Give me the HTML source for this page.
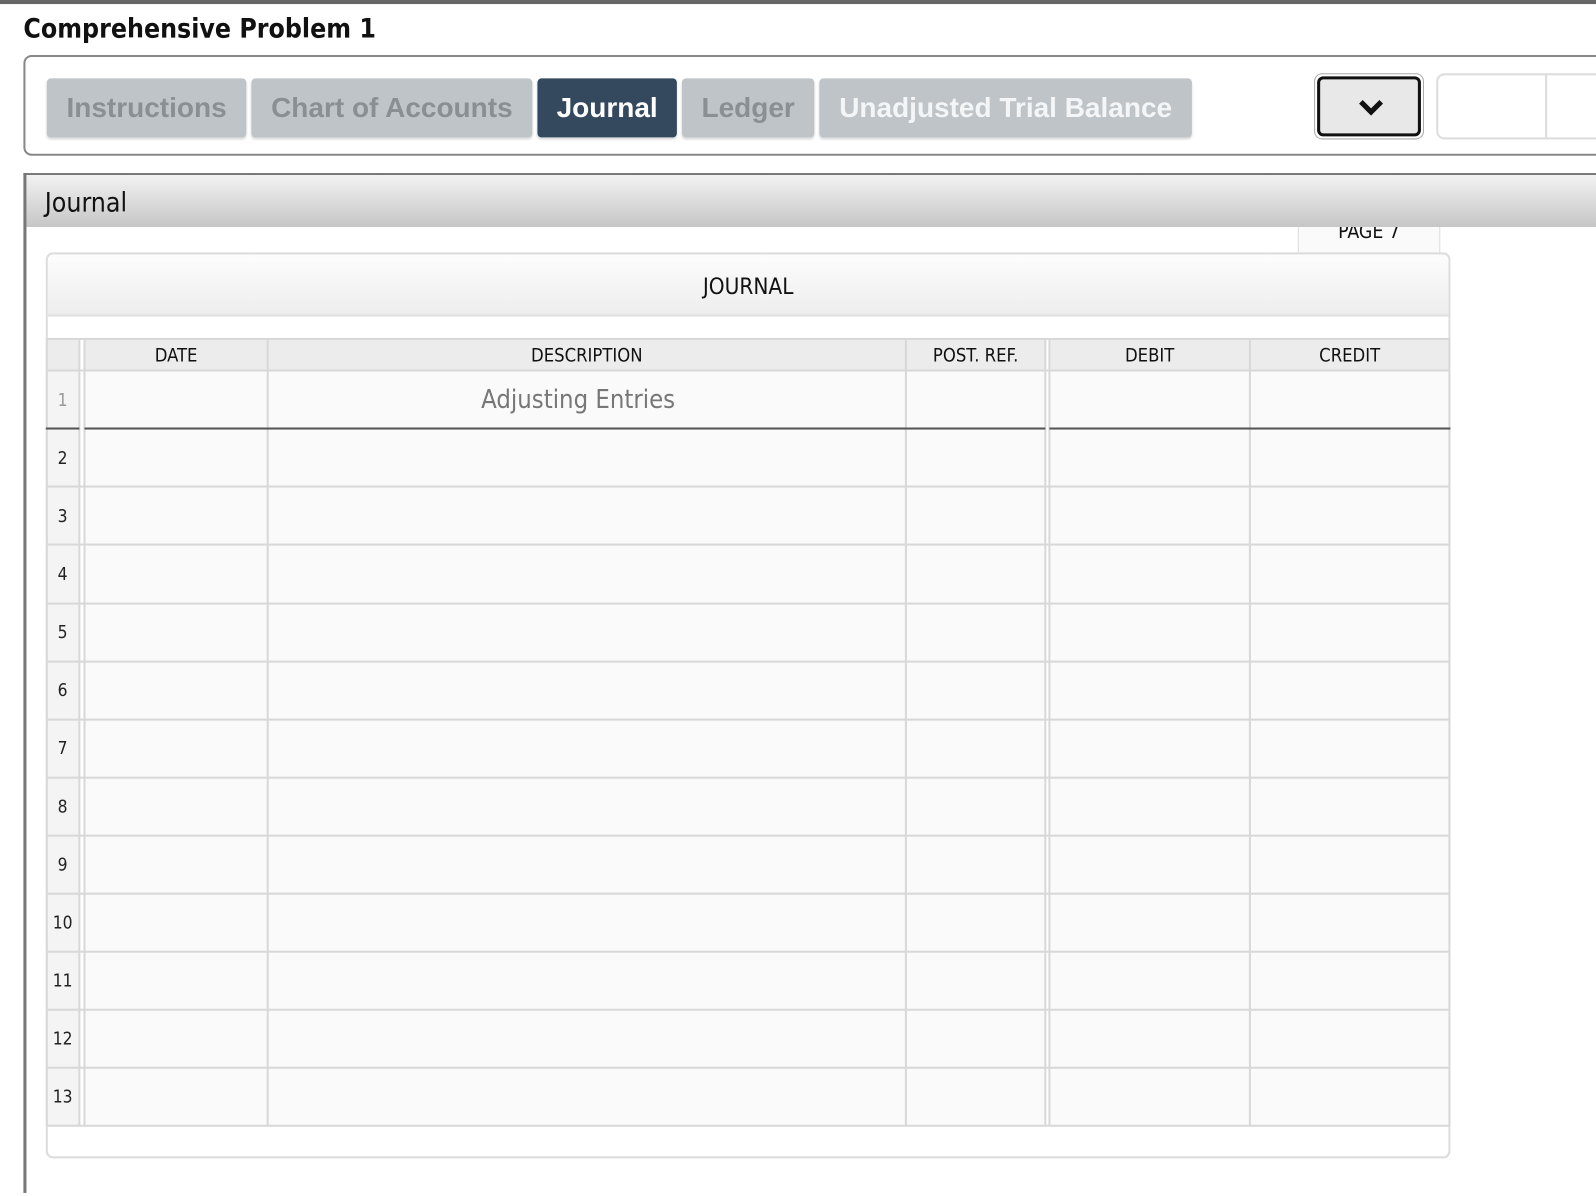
<!DOCTYPE html>
<html><head><meta charset="utf-8"><style>
*{margin:0;padding:0;box-sizing:border-box}
body{width:1596px;height:1196px;background:#fff;position:relative;overflow:hidden;font-family:"Liberation Sans",sans-serif}
#w{position:absolute;left:0;top:0;width:1568px;height:1175px;transform:scale(1.01786);transform-origin:0 0}
.a{position:absolute}
.tab{position:absolute;top:77px;height:58px;border-radius:4px;background:#bfc4c8;color:#8a8f94;font-weight:bold;font-size:27.5px;text-align:center;line-height:58px;box-shadow:0 2px 2px rgba(0,0,0,.15)}
.n{font-family:"DejaVu Sans Condensed","Liberation Sans Narrow","Liberation Sans",sans-serif;font-stretch:condensed}
.vl{position:absolute;top:333px;height:773px;width:2px;background:#d8d8d8}
.hl{position:absolute;left:45px;width:1380px;height:2px;background:#d8d8d8}
.rn{position:absolute;left:45px;width:33px;text-align:center;font-size:17px;color:#222}
.hd{position:absolute;top:333px;height:31px;line-height:33px;text-align:center;font-size:18px;color:#111}
</style></head><body><div id="w">
<div class="a" style="left:0;top:0;width:1600px;height:4px;background:#666"></div>
<div class="a n" style="left:23px;top:14px;font-size:26px;font-weight:bold;color:#111">Comprehensive Problem 1</div>
<div class="a" style="left:23px;top:54px;width:1600px;height:99px;border:2px solid #888;border-radius:8px"></div>
<div class="tab" style="left:46px;width:196px">Instructions</div>
<div class="tab" style="left:247px;width:276px">Chart of Accounts</div>
<div class="tab" style="left:528px;width:137px;background:#34485e;color:#fff">Journal</div>
<div class="tab" style="left:670px;width:130px">Ledger</div>
<div class="tab" style="left:805px;width:366px;color:#f4f5f6">Unadjusted Trial Balance</div>
<div class="a" style="left:1291px;top:72px;width:108px;height:65px;border:1px solid #aaa;border-radius:8px"></div>
<div class="a" style="left:1294px;top:75px;width:102px;height:59px;border:3px solid #111;border-radius:6px;background:#e8e8e8"></div>
<svg class="a" style="left:1334px;top:96px" width="26" height="20"><path d="M3 4 L13 14 L23 4" stroke="#111" stroke-width="5" fill="none"/></svg>
<div class="a" style="left:1411px;top:72px;width:200px;height:65px;border:2px solid #ddd;border-radius:8px"></div>
<div class="a" style="left:1518px;top:72px;width:2px;height:65px;background:#ddd"></div>
<div class="a" style="left:23px;top:170px;width:1600px;height:1002px;border-left:3px solid #777;border-top:2px solid #777"></div>
<div class="a" style="left:26px;top:172px;width:1600px;height:51px;background:linear-gradient(#f2f2f2,#c6c6c6)"></div>
<div class="a n" style="left:44px;top:185px;font-size:26px;color:#111">Journal</div>
<div class="a n" style="left:1275px;top:223px;width:140px;height:26px;border:1px solid #ddd;border-top:none;background:#fafafa;overflow:hidden;text-align:center;font-size:19px;line-height:10px;color:#111">PAGE 7</div>
<div class="a" style="left:45px;top:248px;width:1380px;height:890px;border:2px solid #ddd;border-radius:7px;background:#fff"></div>
<div class="a n" style="left:47px;top:250px;width:1376px;height:61px;background:linear-gradient(#fdfdfd,#ededed);border-bottom:2px solid #ddd;border-radius:6px 6px 0 0;text-align:center;line-height:66px;font-size:22px;color:#111">JOURNAL</div>
<div class="a" style="left:45px;top:333px;width:1380px;height:773px;background:#fafafa"></div>
<div class="a" style="left:45px;top:333px;width:1380px;height:31px;background:#ececec"></div>
<div class="a" style="left:45px;top:364px;width:33px;height:742px;background:#f4f4f4"></div>
<div class="a" style="left:78px;top:333px;width:5px;height:773px;background:#fff"></div>
<div class="a" style="left:1027px;top:333px;width:4px;height:773px;background:#fff"></div>
<div class="vl" style="left:45px"></div><div class="vl" style="left:77px"></div><div class="vl" style="left:82px"></div>
<div class="vl" style="left:262px"></div><div class="vl" style="left:889px"></div><div class="vl" style="left:1026px"></div>
<div class="vl" style="left:1030px"></div><div class="vl" style="left:1227px"></div><div class="vl" style="left:1423px"></div>
<div class="hl" style="top:332px"></div><div class="hl" style="top:363px"></div>
<div class="a" style="left:45px;top:420px;width:33px;height:2px;background:#555"></div>
<div class="a" style="left:83px;top:420px;width:944px;height:2px;background:#555"></div>
<div class="a" style="left:1031px;top:420px;width:394px;height:2px;background:#555"></div>
<div class="hl" style="top:477px"></div><div class="hl" style="top:534px"></div><div class="hl" style="top:592px"></div>
<div class="hl" style="top:649px"></div><div class="hl" style="top:706px"></div><div class="hl" style="top:763px"></div>
<div class="hl" style="top:820px"></div><div class="hl" style="top:877px"></div><div class="hl" style="top:934px"></div>
<div class="hl" style="top:991px"></div><div class="hl" style="top:1048px"></div><div class="hl" style="top:1105px"></div>
<div class="hd n" style="left:83px;width:180px">DATE</div>
<div class="hd n" style="left:263px;width:627px">DESCRIPTION</div>
<div class="hd n" style="left:890px;width:137px">POST. REF.</div>
<div class="hd n" style="left:1031px;width:197px">DEBIT</div>
<div class="hd n" style="left:1228px;width:196px">CREDIT</div>
<div class="a n" style="left:263px;top:378px;width:610px;text-align:center;font-size:25px;color:#777">Adjusting Entries</div>
<div class="rn n" style="top:384px;color:#999">1</div>
<div class="rn n" style="top:441px">2</div>
<div class="rn n" style="top:498px">3</div>
<div class="rn n" style="top:555px">4</div>
<div class="rn n" style="top:612px">5</div>
<div class="rn n" style="top:669px">6</div>
<div class="rn n" style="top:726px">7</div>
<div class="rn n" style="top:783px">8</div>
<div class="rn n" style="top:840px">9</div>
<div class="rn n" style="top:897px">10</div>
<div class="rn n" style="top:954px">11</div>
<div class="rn n" style="top:1011px">12</div>
<div class="rn n" style="top:1068px">13</div>
</div></body></html>
